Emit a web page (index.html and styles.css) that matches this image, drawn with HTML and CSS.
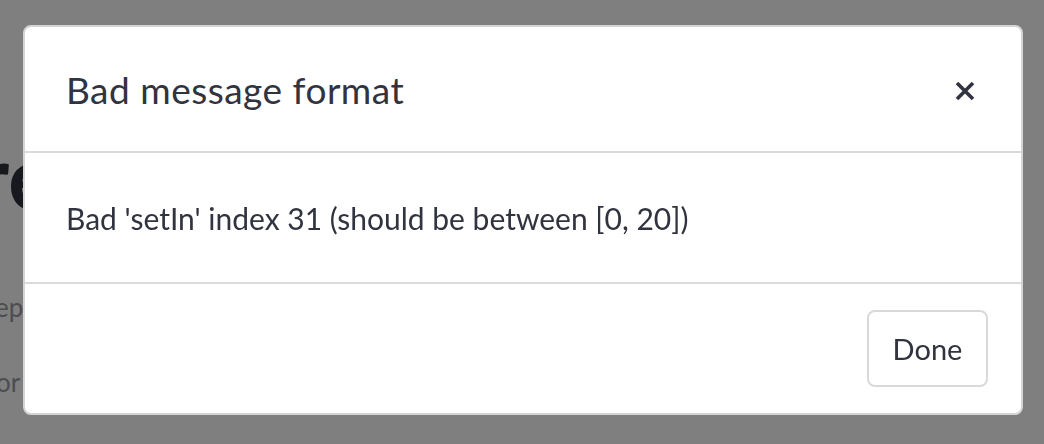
FILE: index.html
```html
<!DOCTYPE html>
<html lang="en">
<head>
<meta charset="utf-8">
<title>Bad message format</title>
<link rel="stylesheet" href="styles.css">
</head>
<body>
<main class="page">
  <h1 class="page-title">re</h1>
  <p class="page-line line-a">ep</p>
  <p class="page-line line-b">or</p>
</main>
<div class="backdrop">
  <div class="modal" role="dialog" aria-labelledby="modal-title">
    <header class="modal-header">
      <h2 class="modal-title" id="modal-title">Bad message format</h2>
      <button class="close" aria-label="Close">
        <svg viewBox="0 0 20 20" width="20" height="20" aria-hidden="true">
          <path d="M2 2 L18 18 M18 2 L2 18" stroke="#31333f" stroke-width="3.6" fill="none"/>
        </svg>
      </button>
    </header>
    <section class="modal-body">
      <p class="message">Bad 'setIn' index 31 (should be between [0, 20])</p>
    </section>
    <footer class="modal-footer">
      <button class="done">Done</button>
    </footer>
  </div>
</div>
</body>
</html>
```

FILE: styles.css
```css
html, body {
  margin: 0;
  padding: 0;
  width: 1044px;
  height: 444px;
  overflow: hidden;
  background: #ffffff;
  font-family: "Lato", "Liberation Sans", sans-serif;
  color: #31333f;
}

.page {
  display: flex;
  flex-direction: column;
  padding-top: 131px;
}

.page-title {
  margin: 0 0 0 -24px;
  font-size: 89px;
  font-weight: 700;
  line-height: 1;
  color: #31333f;
}

.page-line {
  margin: 0;
  font-size: 26px;
  line-height: 1;
  color: #999aa0;
}

.line-a {
  margin-top: 74px;
  margin-left: -5px;
}

.line-b {
  margin-top: 49px;
  margin-left: -4px;
}

.backdrop {
  position: fixed;
  inset: 0;
  background: rgba(0, 0, 0, 0.5);
  padding: 25px 0 0 23px;
  box-sizing: border-box;
}

.modal {
  width: 1000px;
  height: 390px;
  box-sizing: border-box;
  background: #ffffff;
  border: 2px solid #d4d4d4;
  border-radius: 8px;
  display: flex;
  flex-direction: column;
}

.modal-header {
  height: 126px;
  box-sizing: border-box;
  display: flex;
  align-items: center;
  justify-content: space-between;
  padding: 0 46px 0 41px;
  border-bottom: 2px solid #dadada;
}

.modal-title {
  margin: 0;
  font-size: 37px;
  letter-spacing: 0.5px;
  font-weight: 400;
  line-height: 1;
  color: #31333f;
}

.close {
  border: 0;
  background: none;
  padding: 0;
  width: 20px;
  height: 20px;
  display: flex;
  cursor: pointer;
  margin-top: 4px;
}

.modal-body {
  height: 131px;
  box-sizing: border-box;
  display: flex;
  align-items: center;
  padding: 0 41px;
  border-bottom: 2px solid #dadada;
}

.message {
  margin: 0;
  font-size: 30px;
  line-height: 1;
  color: #31333f;
}

.modal-footer {
  flex: 1;
  display: flex;
  align-items: center;
  justify-content: flex-end;
  padding: 0 33px;
}

.done {
  width: 121px;
  height: 77px;
  box-sizing: border-box;
  border: 2px solid #d9d9d9;
  border-radius: 8px;
  background: #ffffff;
  font-family: inherit;
  font-size: 29px;
  color: #31333f;
  padding: 0;
  cursor: pointer;
}
```
